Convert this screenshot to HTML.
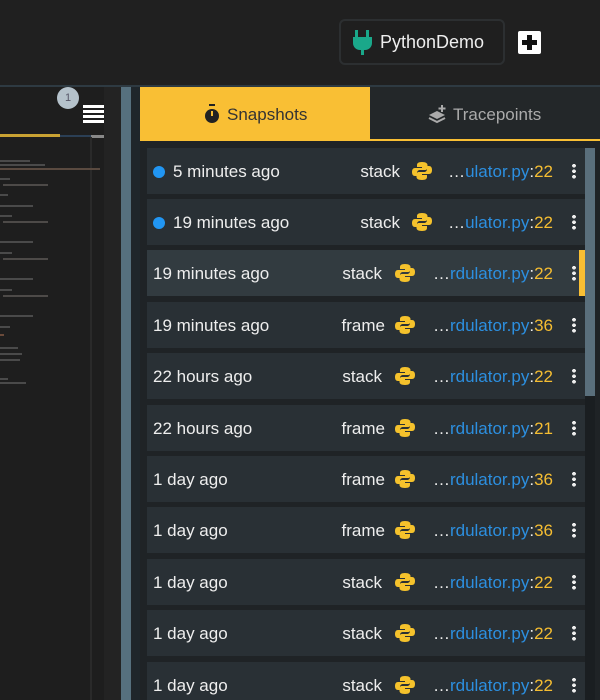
<!DOCTYPE html>
<html><head><meta charset="utf-8"><style>
*{margin:0;padding:0;box-sizing:border-box}
html,body{width:600px;height:700px;overflow:hidden}
body{background:#202020;font-family:"Liberation Sans",sans-serif;position:relative;color:#e8e8e8}
.a{position:absolute}
.row{position:absolute;left:147px;width:438px;height:46px;background:#293035}
.row span{position:absolute;top:14px;font-size:17px;line-height:20px;white-space:nowrap}
.t{color:#eee}
.lbl{text-align:right;width:60px;color:#eee}
.file{text-align:right;width:160px;color:#eee}
.b{color:#2c8fe0;font-style:normal}.y{color:#f5bd32;font-style:normal}
.dot{position:absolute;top:18px;left:6px;width:12px;height:12px;border-radius:50%;background:#2196f3}
.keb{position:absolute;top:15px;left:425px;width:4px;height:16px;background:
radial-gradient(circle,#eee 1.8px,transparent 2px) 0 0/4px 5.5px repeat-y}
.py{position:absolute;top:13px;width:20px;height:20px}
.mm{position:absolute;height:2px;background:#4a4a4a}
</style></head><body>
<div class="a" style="left:0;top:85px;width:600px;height:2px;background:#2e3a42"></div>
<div class="a" style="left:339px;top:19px;width:166px;height:46px;border:2px solid #2c2f31;border-radius:6px;background:#1f1f1f"></div>
<svg class="a" style="left:352px;top:28px" width="22" height="28" viewBox="0 0 22 28"><rect x="3" y="2" width="3" height="7" fill="#1aa88a"/><rect x="14" y="2" width="3" height="7" fill="#1aa88a"/><path d="M1 9h19v6a7 7 0 0 1-7 7h-1v5h-3v-5h-1a7 7 0 0 1-7-7z" fill="#1aa88a"/></svg>
<div class="a" style="left:380px;top:32px;font-size:18px;color:#eee">PythonDemo</div>
<div class="a" style="left:518px;top:31px;width:23px;height:23px;background:#fff;border-radius:2px"></div>
<div class="a" style="left:527px;top:35px;width:5px;height:15px;background:#111"></div>
<div class="a" style="left:522px;top:40px;width:15px;height:5px;background:#111"></div>
<div class="a" style="left:0;top:87px;width:121px;height:613px;background:#1e1e1e"></div>
<div class="a" style="left:57px;top:87px;width:22px;height:22px;border-radius:50%;background:#b5c2cb;color:#556;font-size:11px;text-align:center;line-height:22px">1</div>
<div class="a" style="left:83px;top:105px;width:24px;height:3px;background:#fff;box-shadow:0 5px 0 #fff,0 10px 0 #fff,0 15px 0 #fff"></div>
<div class="a" style="left:0;top:134px;width:60px;height:3px;background:#c9a233"></div>
<div class="a" style="left:60px;top:135px;width:31px;height:2px;background:#2b3f55"></div>
<div class="a" style="left:91px;top:135px;width:14px;height:3px;background:#888"></div>
<div class="a" style="left:90px;top:137px;width:2px;height:563px;background:#2a2a2a"></div>
<div class="mm" style="left:0;top:160px;width:30px"></div><div class="mm" style="left:0;top:164px;width:45px"></div><div class="mm" style="left:0;top:168px;width:100px;background:#5a4a40"></div>
<div class="mm" style="left:0;top:178px;width:10px"></div><div class="mm" style="left:3px;top:184px;width:45px;background:#4d4a48"></div><div class="mm" style="left:0;top:194px;width:8px"></div><div class="mm" style="left:0;top:205px;width:33px"></div>
<div class="mm" style="left:0;top:215px;width:12px"></div><div class="mm" style="left:3px;top:221px;width:45px;background:#4d4a48"></div><div class="mm" style="left:0;top:241px;width:33px"></div>
<div class="mm" style="left:0;top:252px;width:12px"></div><div class="mm" style="left:3px;top:258px;width:45px;background:#4d4a48"></div><div class="mm" style="left:0;top:278px;width:33px"></div>
<div class="mm" style="left:0;top:289px;width:12px"></div><div class="mm" style="left:3px;top:295px;width:45px;background:#4d4a48"></div><div class="mm" style="left:0;top:315px;width:33px"></div>
<div class="mm" style="left:0;top:326px;width:10px"></div><div class="mm" style="left:0;top:334px;width:4px;background:#6a4a3a"></div>
<div class="mm" style="left:0;top:347px;width:18px"></div><div class="mm" style="left:0;top:353px;width:22px"></div><div class="mm" style="left:0;top:359px;width:20px"></div>
<div class="mm" style="left:0;top:378px;width:8px"></div><div class="mm" style="left:0;top:382px;width:26px"></div>
<div class="a" style="left:104px;top:87px;width:17px;height:613px;background:#232323"></div>
<div class="a" style="left:121px;top:87px;width:10px;height:613px;background:#56707e"></div>
<div class="a" style="left:131px;top:87px;width:9px;height:613px;background:#1f262b"></div>
<div class="a" style="left:140px;top:87px;width:460px;height:613px;background:#1f2326"></div>
<div class="a" style="left:140px;top:87px;width:230px;height:52px;background:#f9bf34"></div>
<div class="a" style="left:370px;top:87px;width:230px;height:52px;background:#232729"></div>
<div class="a" style="left:140px;top:139px;width:460px;height:2px;background:#f9bf34"></div>
<svg class="a" style="left:204px;top:104px" width="16" height="20" viewBox="0 0 16 20"><rect x="5" y="0" width="6" height="2" fill="#222"/><circle cx="8" cy="12" r="7" fill="#222"/><path d="M8 12V7" stroke="#f9bf34" stroke-width="2"/></svg>
<div class="a" style="left:227px;top:105px;font-size:17px;color:#333">Snapshots</div>
<svg class="a" style="left:428px;top:104px" width="20" height="20" viewBox="0 0 20 20"><path d="M1 11l8-4 8 4-8 4z" fill="#aaa"/><path d="M1 14l8 4 8-4" stroke="#aaa" stroke-width="2" fill="none"/><path d="M14 1v7M10.5 4.5h7" stroke="#aaa" stroke-width="2"/></svg>
<div class="a" style="left:453px;top:105px;font-size:17px;color:#aaa">Tracepoints</div>
<div class="a" style="left:585px;top:148px;width:10px;height:552px;background:#1a1e21"></div>
<div class="a" style="left:585px;top:148px;width:10px;height:248px;background:#5a6f7c"></div>

<svg width="0" height="0" style="position:absolute"><defs><g id="p"><path d="M10 1c-4 0-5 1.5-5 3v2h5v1H3C1 7 0 8.5 0 11s1 4 3 4h2v-3c0-2 1.5-3 3-3h5c1.5 0 2.5-1 2.5-2.5V4c0-1.5-1.5-3-5.5-3z" fill="#f5c22c"/><path d="M10 19c4 0 5-1.5 5-3v-2h-5v-1h7c2 0 3-1.5 3-4s-1-4-3-4h-2v3c0 2-1.5 3-3 3H7c-1.5 0-2.5 1-2.5 2.5V16c0 1.5 1.5 3 5.5 3z" fill="#f5c22c"/></g></defs></svg>

<div class="row" style="top:148px"><div class="dot"></div><span class="t" style="left:26px">5 minutes ago</span><span class="lbl" style="left:193px">stack</span><svg class="py" style="left:265px" viewBox="0 0 20 20"><use href="#p"/></svg><span class="file" style="left:246px">…<i class="b">ulator.py</i>:<i class="y">22</i></span><div class="keb"></div></div>
<div class="row" style="top:199px"><div class="dot"></div><span class="t" style="left:26px">19 minutes ago</span><span class="lbl" style="left:193px">stack</span><svg class="py" style="left:265px" viewBox="0 0 20 20"><use href="#p"/></svg><span class="file" style="left:246px">…<i class="b">ulator.py</i>:<i class="y">22</i></span><div class="keb"></div></div>
<div class="row" style="top:250px;background:#323b40"><span class="t" style="left:6px">19 minutes ago</span><span class="lbl" style="left:175px">stack</span><svg class="py" style="left:248px" viewBox="0 0 20 20"><use href="#p"/></svg><span class="file" style="left:246px">…<i class="b">rdulator.py</i>:<i class="y">22</i></span><div class="keb"></div><div class="a" style="left:432px;top:0;width:6px;height:46px;background:#f9bf34"></div></div>
<div class="row" style="top:302px"><span class="t" style="left:6px">19 minutes ago</span><span class="lbl" style="left:178px">frame</span><svg class="py" style="left:248px" viewBox="0 0 20 20"><use href="#p"/></svg><span class="file" style="left:246px">…<i class="b">rdulator.py</i>:<i class="y">36</i></span><div class="keb"></div></div>
<div class="row" style="top:353px"><span class="t" style="left:6px">22 hours ago</span><span class="lbl" style="left:175px">stack</span><svg class="py" style="left:248px" viewBox="0 0 20 20"><use href="#p"/></svg><span class="file" style="left:246px">…<i class="b">rdulator.py</i>:<i class="y">22</i></span><div class="keb"></div></div>
<div class="row" style="top:405px"><span class="t" style="left:6px">22 hours ago</span><span class="lbl" style="left:178px">frame</span><svg class="py" style="left:248px" viewBox="0 0 20 20"><use href="#p"/></svg><span class="file" style="left:246px">…<i class="b">rdulator.py</i>:<i class="y">21</i></span><div class="keb"></div></div>
<div class="row" style="top:456px"><span class="t" style="left:6px">1 day ago</span><span class="lbl" style="left:178px">frame</span><svg class="py" style="left:248px" viewBox="0 0 20 20"><use href="#p"/></svg><span class="file" style="left:246px">…<i class="b">rdulator.py</i>:<i class="y">36</i></span><div class="keb"></div></div>
<div class="row" style="top:507px"><span class="t" style="left:6px">1 day ago</span><span class="lbl" style="left:178px">frame</span><svg class="py" style="left:248px" viewBox="0 0 20 20"><use href="#p"/></svg><span class="file" style="left:246px">…<i class="b">rdulator.py</i>:<i class="y">36</i></span><div class="keb"></div></div>
<div class="row" style="top:559px"><span class="t" style="left:6px">1 day ago</span><span class="lbl" style="left:175px">stack</span><svg class="py" style="left:248px" viewBox="0 0 20 20"><use href="#p"/></svg><span class="file" style="left:246px">…<i class="b">rdulator.py</i>:<i class="y">22</i></span><div class="keb"></div></div>
<div class="row" style="top:610px"><span class="t" style="left:6px">1 day ago</span><span class="lbl" style="left:175px">stack</span><svg class="py" style="left:248px" viewBox="0 0 20 20"><use href="#p"/></svg><span class="file" style="left:246px">…<i class="b">rdulator.py</i>:<i class="y">22</i></span><div class="keb"></div></div>
<div class="row" style="top:662px"><span class="t" style="left:6px">1 day ago</span><span class="lbl" style="left:175px">stack</span><svg class="py" style="left:248px" viewBox="0 0 20 20"><use href="#p"/></svg><span class="file" style="left:246px">…<i class="b">rdulator.py</i>:<i class="y">22</i></span><div class="keb"></div></div>
</body></html>
